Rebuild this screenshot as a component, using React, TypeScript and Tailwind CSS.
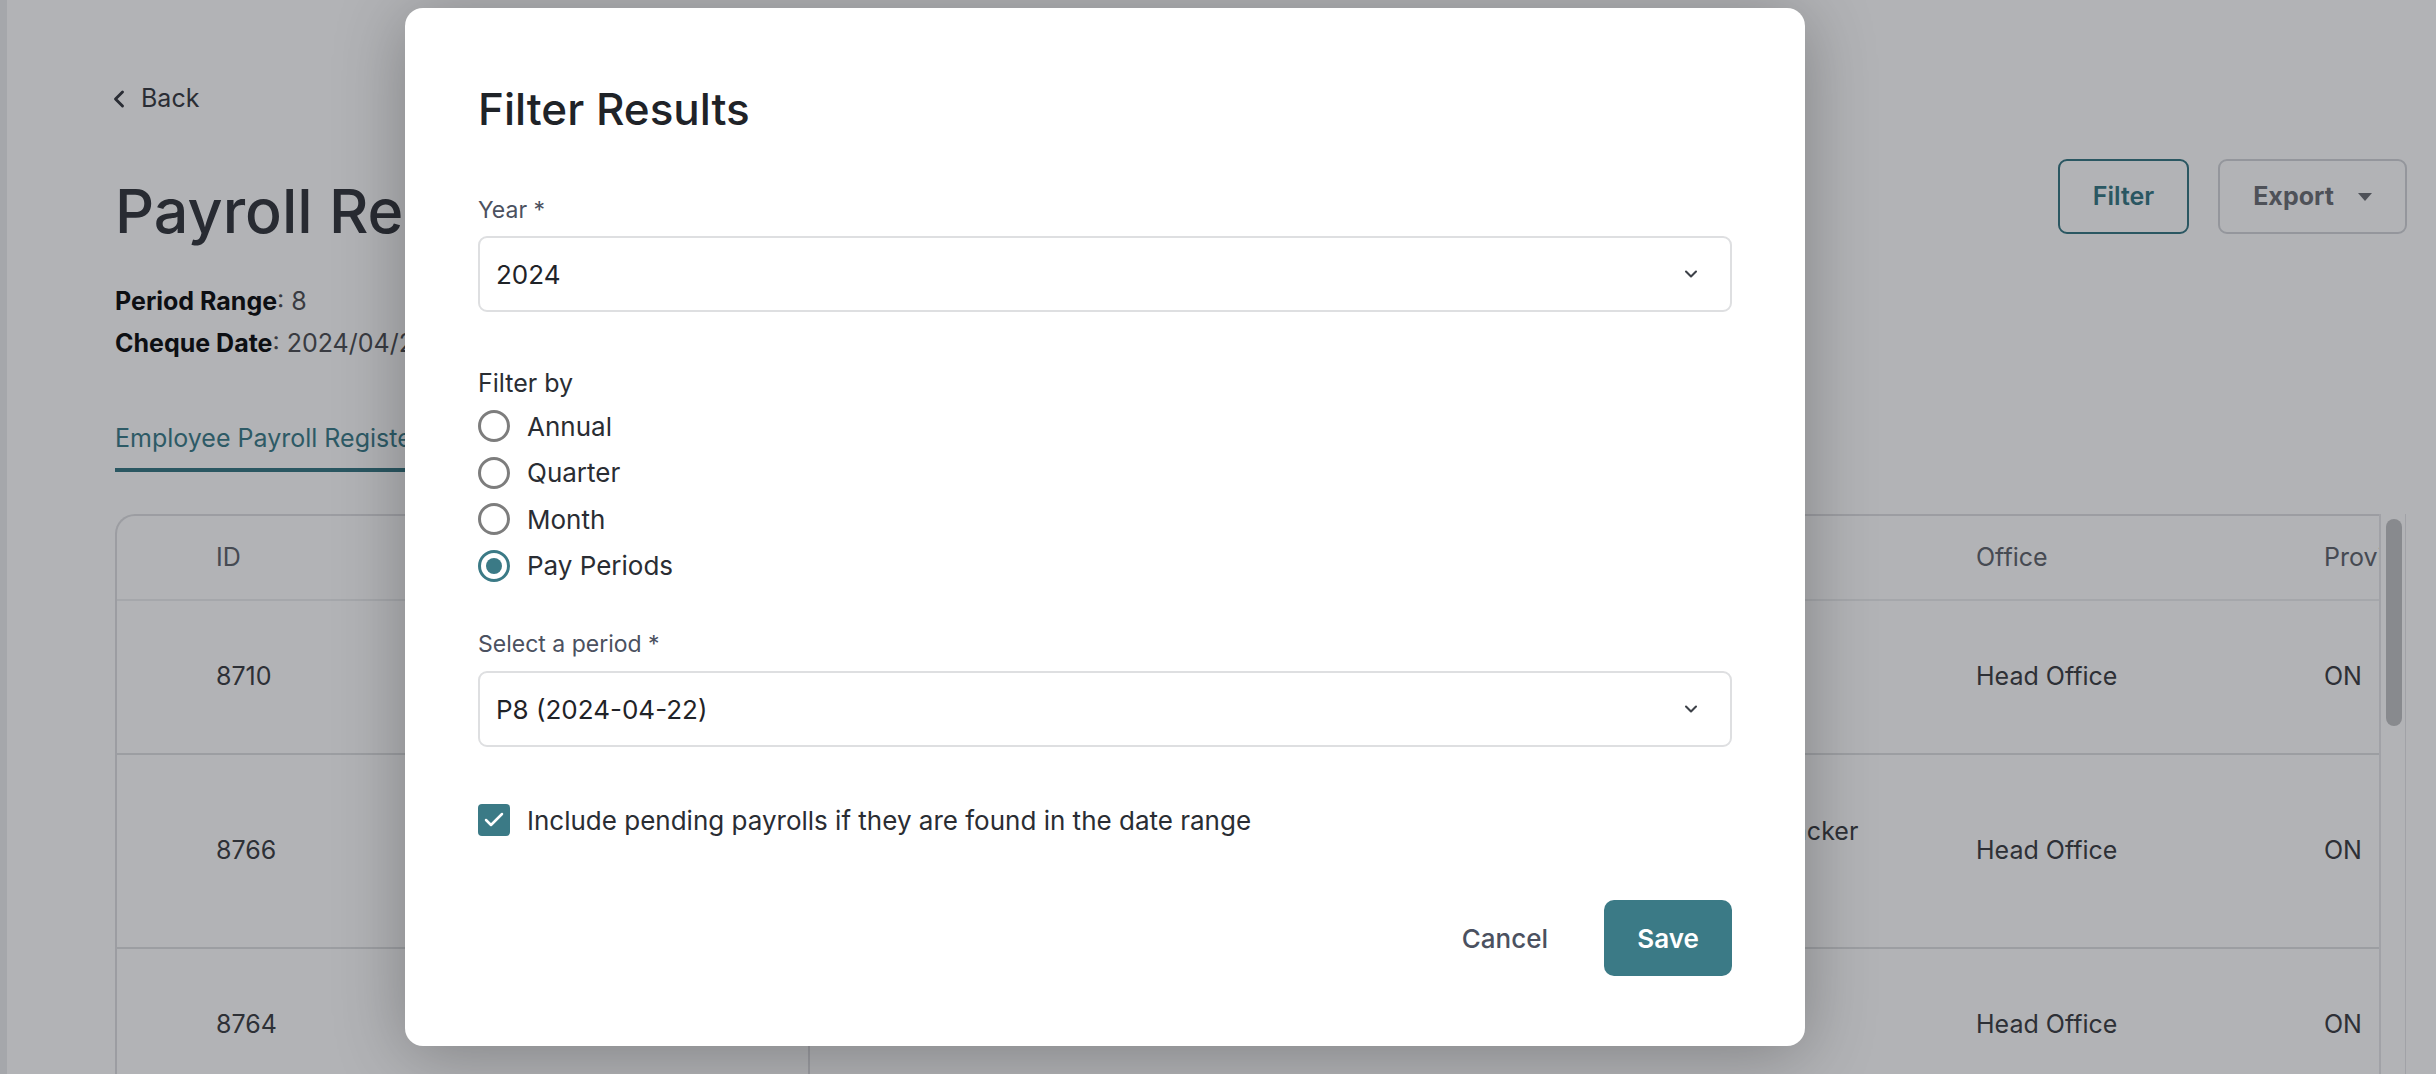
import React from 'react';
import { ChevronLeft, ChevronDown, Check } from 'lucide-react';

const rows = [
  { id: '8710', name: 'Olivia Martin', role: ['Clerk'], office: 'Head Office', prov: 'ON', h: 'h-[154px]' },
  { id: '8766', name: 'Daniel Chen', role: ['Time Tracker', 'Lead'], office: 'Head Office', prov: 'ON', h: 'h-[194px]' },
  { id: '8764', name: 'Priya Patel', role: ['Clerk'], office: 'Head Office', prov: 'ON', h: 'h-[154px]' },
];

const cols = 'grid grid-cols-[691px_852px_280px_350px_227px]';

const Radio = ({ label, checked }: { label: string; checked?: boolean }) => (
  <label className="flex h-[46.5px] items-center gap-[17px]">
    <span
      className={
        checked
          ? 'flex h-[32px] w-[32px] items-center justify-center rounded-full border-[3.5px] border-[#3b7a86]'
          : 'flex h-[32px] w-[32px] items-center justify-center rounded-full border-[3.5px] border-[#7d7d7d]'
      }
    >
      {checked && <span className="h-[16px] w-[16px] rounded-full bg-[#3b7a86]" />}
    </span>
    <span className="text-[26px] text-[#2a2d33]">{label}</span>
  </label>
);

const SelectBox = ({ value }: { value: string }) => (
  <div className="flex h-[76px] items-center justify-between rounded-[9px] border-2 border-[#dedfe1] pl-[16px] pr-[29px]">
    <span className="text-[26px] text-[#1f2328]">{value}</span>
    <ChevronDown size={20} strokeWidth={2.5} className="text-[#3d4148]" />
  </div>
);

export default function App() {
  return (
    <div className="relative h-[1074px] w-[2436px] overflow-hidden bg-white font-['Inter',sans-serif]">
      <div className="flex h-full">
        <div className="w-[7px] bg-[#eceef0]" />
        <div className="flex flex-1 flex-col">
          <div className="h-[7px] bg-[#e4e5e8]" />
          <main className="flex flex-col pl-[108px] pr-[29px] pt-[81px]">
            {/* back link */}
            <button className="flex h-[36px] items-center gap-[8px] text-[25px] text-[#3b3e44]">
              <ChevronLeft size={28} strokeWidth={2.5} className="-ml-[10px]" />
              Back
            </button>

            <div className="mt-[42px] flex items-start justify-between">
              <div>
                <h1 className="mt-[16px] text-[61px] font-medium leading-[72px] text-[#383b41]">Payroll Register</h1>
                <div className="mt-[33px] text-[25px] leading-[42px] text-[#505256]">
                  <p>
                    <span className="font-bold text-[#111214]">Period Range</span>: 8
                  </p>
                  <p>
                    <span className="font-bold text-[#111214]">Cheque Date</span>: 2024/04/22
                  </p>
                </div>
              </div>
              <div className="flex gap-[29px]">
                <button className="h-[75px] w-[131px] rounded-[9px] border-2 border-[#3b7a86] text-[25px] font-semibold text-[#3b7a86]">
                  Filter
                </button>
                <button className="flex h-[75px] w-[189px] items-center justify-center gap-[24px] rounded-[9px] border-2 border-[#d4d6da] text-[25px] font-bold text-[#6f7278]">
                  Export
                  <svg width="14" height="8" viewBox="0 0 14 8">
                    <polygon points="0,0 14,0 7,8" fill="#6f7278" />
                  </svg>
                </button>
              </div>
            </div>

            {/* tabs */}
            <div className="mt-[56px] flex">
              <div className="border-b-4 border-[#3b7a86] pb-[12px] text-[25px] leading-[36px] text-[#3f7f8b]">
                Employee Payroll Register
              </div>
            </div>

            {/* table */}
            <div className="mt-[42px] flex">
              <div className="w-[2264px] overflow-hidden">
                <div className="w-[2402px] rounded-tl-[20px] border-l-2 border-t-2 border-[#dfe0e2] text-[25px]">
                  <div className={`${cols} h-[85px] items-center border-b-2 border-[#eceef0] text-[#63676f]`}>
                    <div className="pl-[99px]">ID</div>
                    <div className="flex h-full items-center border-l-2 border-[#dfe0e2] pl-[40px]">Employee</div>
                    <div className="pl-[43px]">Role</div>
                    <div className="pl-[36px]">Office</div>
                    <div className="pl-[34px]">Province</div>
                  </div>
                  {rows.map((r) => (
                    <div key={r.id} className={`${cols} ${r.h} items-center border-b-2 border-[#e0e1e3] text-[#3f4246]`}>
                      <div className="pl-[99px]">{r.id}</div>
                      <div className="flex h-full items-center border-l-2 border-[#dfe0e2] pl-[40px]">{r.name}</div>
                      <div className="whitespace-nowrap pl-[43px] leading-[40px]">
                        {r.role.map((l) => (
                          <div key={l}>{l}</div>
                        ))}
                      </div>
                      <div className="pl-[36px]">{r.office}</div>
                      <div className="pl-[34px]">{r.prov}</div>
                    </div>
                  ))}
                </div>
              </div>
              <div className="w-[27px] border-l-2 border-r border-[#e6e7e9] pl-[5px] pt-[5px]">
                <div className="h-[207px] w-[16px] rounded-full bg-[#c3c4c6]" />
              </div>
            </div>
          </main>
        </div>
      </div>

      {/* dim overlay */}
      <div className="absolute inset-0 bg-[rgba(8,10,18,0.31)]" />

      {/* modal */}
      <div className="absolute left-[405px] top-[8px] flex h-[1038px] w-[1400px] flex-col rounded-[18px] bg-white px-[73px] pt-[73px] shadow-[0_8px_70px_rgba(0,0,0,0.28)]">
        <h2 className="text-[44px] font-medium leading-[56px] text-[#1f2328]">Filter Results</h2>

        <div className="mt-[56px] text-[23px] leading-[34px] text-[#4b5160]">Year *</div>
        <div className="mt-[9px]">
          <SelectBox value="2024" />
        </div>

        <div className="mt-[54px] text-[25px] leading-[34px] text-[#2a2d33]">Filter by</div>
        <div className="mt-[3px] flex flex-col">
          <Radio label="Annual" />
          <Radio label="Quarter" />
          <Radio label="Month" />
          <Radio label="Pay Periods" checked />
        </div>

        <div className="mt-[38px] text-[23px] leading-[34px] text-[#4b5160]">Select a period *</div>
        <div className="mt-[10px]">
          <SelectBox value="P8 (2024-04-22)" />
        </div>

        <label className="mt-[56px] flex h-[34px] items-center gap-[17px]">
          <span className="flex h-[32px] w-[32px] items-center justify-center rounded-[4px] bg-[#3b7a86]">
            <Check size={24} strokeWidth={2.5} className="text-white" />
          </span>
          <span className="text-[26px] text-[#2a2d33]">Include pending payrolls if they are found in the date range</span>
        </label>

        <div className="mt-[63px] flex justify-end gap-[24px]">
          <button className="h-[76px] px-[32px] text-[26px] font-medium text-[#4b5160]">Cancel</button>
          <button className="h-[76px] w-[128px] rounded-[10px] bg-[#3b7a86] text-[26px] font-semibold text-white">
            Save
          </button>
        </div>
      </div>
    </div>
  );
}
